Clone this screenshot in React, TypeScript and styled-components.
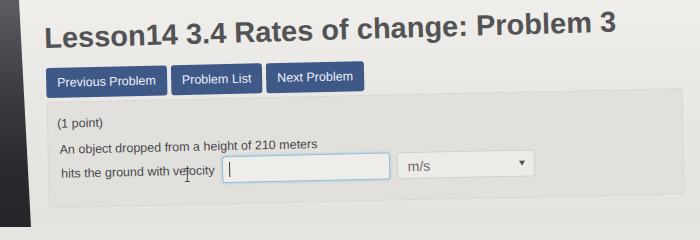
import { createGlobalStyle, styled } from "styled-components";

const GlobalStyle = createGlobalStyle`
    html, body {
        margin: 0;
        padding: 0;
        background: #e7e5e1;
    }

    body {
        font-family: "Liberation Sans", Arial, sans-serif;
    }
`;

const App: React.FC = () => {
    return (
        <>
            <GlobalStyle />
            <Screen>
                <Bezel />
                <Page>
                    <Title>Lesson14 3.4 Rates of change: Problem 3</Title>

                    <NavBar>
                        <NavButton>Previous Problem</NavButton>
                        <NavButton>Problem List</NavButton>
                        <NavButton>Next Problem</NavButton>
                    </NavBar>

                    <ProblemPanel>
                        <Points>(1 point)</Points>
                        <PromptLine>An object dropped from a height of 210 meters</PromptLine>
                        <AnswerRow>
                            <PromptText>
                                hits the ground with velocity
                                <IBeam viewBox="0 0 6 14">
                                    <path d="M0.5 0.5h5M3 0.5v13M0.5 13.5h5" />
                                </IBeam>
                            </PromptText>
                            <AnswerInput>
                                <Caret />
                            </AnswerInput>
                            <UnitSelect>
                                <span>m/s</span>
                                <SelectArrow />
                            </UnitSelect>
                        </AnswerRow>
                    </ProblemPanel>
                </Page>
            </Screen>
        </>
    );
};

const Screen = styled.div`
    display: flex;
    width: 700px;
    height: 227px;
    overflow: hidden;
    background: linear-gradient(to bottom, #efeeea 0%, #e9e7e3 45%, #e5e3df 100%);
`;

const Bezel = styled.div`
    flex: 0 0 32px;
    background: linear-gradient(to bottom, #5c5c62 0%, #3c3c41 40%, #2a2a2e 75%, #26262a 100%);
    clip-path: polygon(0 0, 19px 0, 31px 100%, 0 100%);
`;

const Page = styled.div`
    flex: 1;
    padding: 22px 0 0 15px;
    transform: rotate(-1.25deg);
    transform-origin: 15px 120px;
`;

const Title = styled.h1`
    margin: 0 0 13px -1px;
    font-size: 29px;
    line-height: 33px;
    font-weight: 700;
    color: #535356;
    white-space: nowrap;
    transform: rotate(-0.4deg);
    transform-origin: 0 70%;
`;

const NavBar = styled.div`
    display: flex;
    gap: 4px;
`;

const NavButton = styled.div`
    height: 30px;
    padding: 0 11px;
    display: flex;
    align-items: center;
    border-radius: 3px;
    background: #3e5888;
    color: #eef0f6;
    font-size: 12.5px;
    white-space: nowrap;
`;

const ProblemPanel = styled.div`
    margin-top: 4px;
    width: 636px;
    height: 106px;
    box-sizing: border-box;
    padding: 10px 10px 0 9px;
    background: #e2e0dc;
    border: 1px solid #d9d7d3;
    border-radius: 3px;
    color: #48484a;
    font-size: 12.5px;
`;

const Points = styled.div`
    line-height: 22px;
    margin-bottom: 5px;
`;

const PromptLine = styled.div`
    line-height: 20px;
    padding-left: 2px;
`;

const AnswerRow = styled.div`
    display: flex;
    align-items: center;
    height: 27px;
    padding-left: 3px;
`;

const PromptText = styled.span`
    position: relative;
    margin-right: 7px;
    white-space: nowrap;
`;

const IBeam = styled.svg`
    position: absolute;
    left: 123px;
    top: 4px;
    width: 6px;
    height: 14px;
    fill: none;
    stroke: #4a4a4a;
    stroke-width: 1;
`;

const AnswerInput = styled.div`
    width: 168px;
    height: 27px;
    box-sizing: border-box;
    display: flex;
    align-items: center;
    padding-left: 6px;
    background: #eeedea;
    border: 1px solid #93c1da;
    border-radius: 3px;
    box-shadow: 0 0 3px rgba(110, 170, 210, 0.55);
`;

const Caret = styled.span`
    width: 1px;
    height: 15px;
    background: #3a3a3a;
`;

const UnitSelect = styled.div`
    margin-left: 7px;
    width: 138px;
    height: 27px;
    box-sizing: border-box;
    display: flex;
    align-items: center;
    justify-content: space-between;
    padding: 0 9px 0 10px;
    background: #ecebe8;
    border: 1px solid #d2d0cc;
    border-radius: 3px;
    color: #68686a;
    font-size: 14px;
`;

const SelectArrow = styled.span`
    width: 0;
    height: 0;
    border-left: 3px solid transparent;
    border-right: 3px solid transparent;
    border-top: 5px solid #555;
`;

export default App;
